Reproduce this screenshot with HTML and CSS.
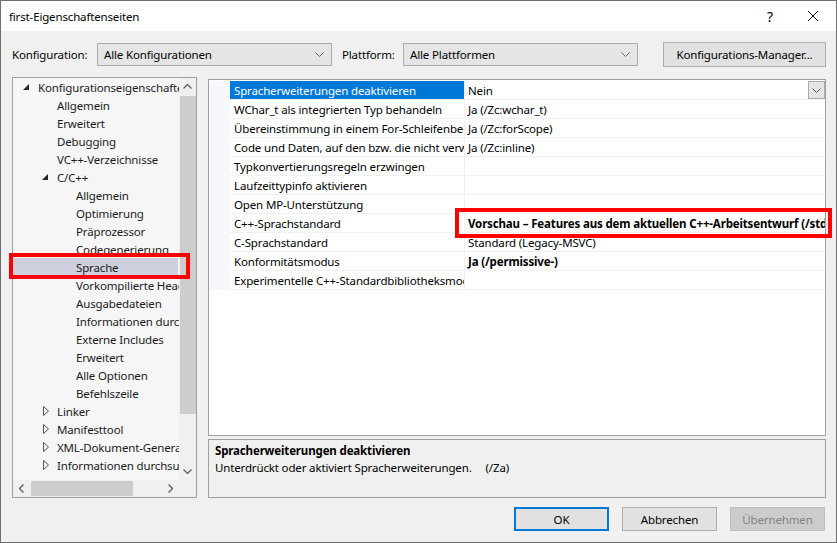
FILE: index.html
```html
<!DOCTYPE html>
<html lang="de">
<head>
    <meta charset="UTF-8">
    <title>first-Eigenschaftenseiten</title>
    <link rel="stylesheet" href="styles.css">
</head>
<body>
    <div class="window">
        <div class="titlebar">
            <span class="title">first-Eigenschaftenseiten</span>
            <span class="help">?</span>
            <span class="close">
                <svg width="12" height="12" viewBox="0 0 12 12"><path d="M1 1 L11 11 M11 1 L1 11" stroke="#111" stroke-width="1" fill="none"/></svg>
            </span>
        </div>

        <div class="content">
            <div class="config-row">
                <label class="lbl lbl-config">Konfiguration:</label>
                <div class="combo">
                    <span>Alle Konfigurationen</span>
                    <svg class="chev" width="9" height="5" viewBox="0 0 9 5"><path d="M0.5 0.5 L4.5 4.5 L8.5 0.5" stroke="#666" fill="none"/></svg>
                </div>
                <label class="lbl lbl-platform">Plattform:</label>
                <div class="combo">
                    <span>Alle Plattformen</span>
                    <svg class="chev" width="9" height="5" viewBox="0 0 9 5"><path d="M0.5 0.5 L4.5 4.5 L8.5 0.5" stroke="#666" fill="none"/></svg>
                </div>
                <button class="btn btn-manager">Konfigurations-Manager...</button>
            </div>

            <div class="main">
                <!-- tree -->
                <div class="tree">
                    <ul class="tree-items">
                        <li class="lv0"><span class="tog"><svg width="6" height="6" viewBox="0 0 6 6"><path d="M6 0 L6 6 L0 6 Z" fill="#262626"/></svg></span>Konfigurationseigenschaften</li>
                        <li class="lv1"><span class="tog"></span>Allgemein</li>
                        <li class="lv1"><span class="tog"></span>Erweitert</li>
                        <li class="lv1"><span class="tog"></span>Debugging</li>
                        <li class="lv1"><span class="tog"></span>VC++-Verzeichnisse</li>
                        <li class="lv1"><span class="tog"><svg width="6" height="6" viewBox="0 0 6 6"><path d="M6 0 L6 6 L0 6 Z" fill="#262626"/></svg></span>C/C++</li>
                        <li class="lv2"><span class="tog"></span>Allgemein</li>
                        <li class="lv2"><span class="tog"></span>Optimierung</li>
                        <li class="lv2"><span class="tog"></span>Präprozessor</li>
                        <li class="lv2"><span class="tog"></span>Codegenerierung</li>
                        <li class="lv2 selected"><span class="tog"></span>Sprache</li>
                        <li class="lv2"><span class="tog"></span>Vorkompilierte Header</li>
                        <li class="lv2"><span class="tog"></span>Ausgabedateien</li>
                        <li class="lv2"><span class="tog"></span>Informationen durchsuchen</li>
                        <li class="lv2"><span class="tog"></span>Externe Includes</li>
                        <li class="lv2"><span class="tog"></span>Erweitert</li>
                        <li class="lv2"><span class="tog"></span>Alle Optionen</li>
                        <li class="lv2"><span class="tog"></span>Befehlszeile</li>
                        <li class="lv1"><span class="tog closed"><svg width="6" height="10" viewBox="0 0 6 10"><path d="M0.5 0.5 L5.5 5 L0.5 9.5 Z" stroke="#555" fill="none"/></svg></span>Linker</li>
                        <li class="lv1"><span class="tog closed"><svg width="6" height="10" viewBox="0 0 6 10"><path d="M0.5 0.5 L5.5 5 L0.5 9.5 Z" stroke="#555" fill="none"/></svg></span>Manifesttool</li>
                        <li class="lv1"><span class="tog closed"><svg width="6" height="10" viewBox="0 0 6 10"><path d="M0.5 0.5 L5.5 5 L0.5 9.5 Z" stroke="#555" fill="none"/></svg></span>XML-Dokument-Generator</li>
                        <li class="lv1"><span class="tog closed"><svg width="6" height="10" viewBox="0 0 6 10"><path d="M0.5 0.5 L5.5 5 L0.5 9.5 Z" stroke="#555" fill="none"/></svg></span>Informationen durchsuchen</li>
                    </ul>
                    <div class="vscroll">
                        <span class="sb-btn"><svg width="9" height="5" viewBox="0 0 9 5"><path d="M0.5 4.5 L4.5 0.5 L8.5 4.5" stroke="#606060" stroke-width="1.3" fill="none"/></svg></span>
                        <div class="sb-track"><div class="vthumb"></div></div>
                        <span class="sb-btn"><svg width="9" height="5" viewBox="0 0 9 5"><path d="M0.5 0.5 L4.5 4.5 L8.5 0.5" stroke="#606060" stroke-width="1.3" fill="none"/></svg></span>
                    </div>
                    <div class="hscroll">
                        <span class="sb-btn"><svg width="5" height="9" viewBox="0 0 5 9"><path d="M4.5 0.5 L0.5 4.5 L4.5 8.5" stroke="#606060" stroke-width="1.3" fill="none"/></svg></span>
                        <div class="sb-track"><div class="hthumb"></div></div>
                        <span class="sb-btn"><svg width="5" height="9" viewBox="0 0 5 9"><path d="M0.5 0.5 L4.5 4.5 L0.5 8.5" stroke="#606060" stroke-width="1.3" fill="none"/></svg></span>
                    </div>
                    <div class="corner"></div>
                </div>

                <div class="right">
                    <div class="grid">
                        <div class="prop">
                            <span class="gutter"></span>
                            <span class="name selected">Spracherweiterungen deaktivieren</span>
                            <span class="value">Nein
                                <span class="drop"><svg width="9" height="5" viewBox="0 0 9 5"><path d="M0.5 0.5 L4.5 4.5 L8.5 0.5" stroke="#555" fill="none"/></svg></span>
                            </span>
                        </div>
                        <div class="prop">
                            <span class="gutter"></span>
                            <span class="name">WChar_t als integrierten Typ behandeln</span>
                            <span class="value">Ja (/Zc:wchar_t)</span>
                        </div>
                        <div class="prop">
                            <span class="gutter"></span>
                            <span class="name">Übereinstimmung in einem For-Schleifenbereich erzwingen</span>
                            <span class="value">Ja (/Zc:forScope)</span>
                        </div>
                        <div class="prop">
                            <span class="gutter"></span>
                            <span class="name">Code und Daten, auf den bzw. die nicht verwiesen wird, entfernen</span>
                            <span class="value">Ja (/Zc:inline)</span>
                        </div>
                        <div class="prop">
                            <span class="gutter"></span>
                            <span class="name">Typkonvertierungsregeln erzwingen</span>
                            <span class="value"></span>
                        </div>
                        <div class="prop">
                            <span class="gutter"></span>
                            <span class="name">Laufzeittypinfo aktivieren</span>
                            <span class="value"></span>
                        </div>
                        <div class="prop">
                            <span class="gutter"></span>
                            <span class="name">Open MP-Unterstützung</span>
                            <span class="value"></span>
                        </div>
                        <div class="prop">
                            <span class="gutter"></span>
                            <span class="name">C++-Sprachstandard</span>
                            <span class="value bold">Vorschau – Features aus dem aktuellen C++-Arbeitsentwurf (/std:c++latest)</span>
                        </div>
                        <div class="prop">
                            <span class="gutter"></span>
                            <span class="name">C-Sprachstandard</span>
                            <span class="value">Standard (Legacy-MSVC)</span>
                        </div>
                        <div class="prop">
                            <span class="gutter"></span>
                            <span class="name">Konformitätsmodus</span>
                            <span class="value bold">Ja (/permissive-)</span>
                        </div>
                        <div class="prop">
                            <span class="gutter"></span>
                            <span class="name">Experimentelle C++-Standardbibliotheksmodule aktivieren</span>
                            <span class="value"></span>
                        </div>
                    </div>

                    <div class="desc">
                        <div class="desc-title">Spracherweiterungen deaktivieren</div>
                        <div class="desc-text">Unterdrückt oder aktiviert Spracherweiterungen.<span class="switch">(/Za)</span></div>
                    </div>
                </div>
            </div>

            <div class="buttons">
                <button class="btn btn-ok">OK</button>
                <button class="btn">Abbrechen</button>
                <button class="btn btn-disabled">Übernehmen</button>
            </div>
        </div>

        <!-- red markers -->
        <div class="mark mark-tree"></div>
        <div class="mark mark-grid"></div>
    </div>
</body>
</html>
```

FILE: styles.css
```css
* {
    margin: 0;
    padding: 0;
    box-sizing: border-box;
}

body {
    font-family: "Noto Sans", "Open Sans", sans-serif;
    font-size: 11.5px;
    letter-spacing: -0.15px;
    color: #000;
    background: #f0f0f0;
}

.window {
    position: relative;
    width: 837px;
    height: 543px;
    border: 1px solid #6e6e6e;
    background: #f0f0f0;
    overflow: hidden;
}

/* title bar */
.titlebar {
    display: flex;
    align-items: center;
    height: 30px;
    background: #fff;
    padding-left: 8px;
}

.titlebar .title {
    flex: 1;
}

.titlebar .help {
    font-size: 14px;
    margin-right: 34px;
}

.titlebar .close {
    display: flex;
    margin-right: 17px;
}

.content {
    padding: 0 10px 0 11px;
}

/* configuration row */
.config-row {
    display: flex;
    align-items: center;
    height: 25px;
    margin-top: 11px;
}

.lbl-config {
    width: 85px;
}

.lbl-platform {
    width: 61px;
    margin-left: 10px;
}

.combo {
    display: flex;
    align-items: center;
    justify-content: space-between;
    width: 235px;
    height: 23px;
    background: #e5e5e5;
    border: 1px solid #acacac;
    padding: 0 7px 0 6px;
}

.btn {
    font-family: inherit;
    font-size: 11.5px;
    letter-spacing: -0.15px;
    color: #000;
    background: #e1e1e1;
    border: 1px solid #adadad;
    height: 24px;
    width: 95px;
}

.btn-manager {
    width: 163px;
    height: 25px;
    margin-left: auto;
}

/* main area */
.main {
    display: flex;
    gap: 11px;
    height: 421px;
    margin-top: 10px;
}

.tree {
    width: 185px;
    border: 1px solid #a0a0a0;
    background: #f6f6f6;
    display: grid;
    grid-template-columns: 1fr 17px;
    grid-template-rows: 1fr 17px;
    overflow: hidden;
}

.tree-items {
    list-style: none;
    overflow: hidden;
}

.tree-items li {
    display: flex;
    align-items: center;
    height: 18px;
    white-space: nowrap;
    color: #1b1b1b;
}

.tree-items li.lv0 { padding-left: 6px; }
.tree-items li.lv1 { padding-left: 25px; }
.tree-items li.lv2 { padding-left: 44px; }

.tree-items li.selected {
    background: #cdd0dc;
    margin-right: 1px;
}

.tog {
    display: flex;
    align-items: center;
    width: 19px;
    height: 18px;
    flex-shrink: 0;
    padding-left: 4px;
}

.tog.closed {
    padding-left: 5px;
}

.vscroll {
    display: flex;
    flex-direction: column;
    background: #f0f0f0;
}

.hscroll {
    display: flex;
    background: #f0f0f0;
}

.corner {
    background: #f0f0f0;
}

.sb-btn {
    display: flex;
    align-items: center;
    justify-content: center;
    width: 17px;
    height: 17px;
    flex-shrink: 0;
}

.sb-track {
    flex: 1;
}

.vthumb {
    margin: 1px 0 0 1px;
    height: 318px;
    background: #cdcdcd;
}

.hthumb {
    margin: 1px 0 0 1px;
    width: 102px;
    height: 15px;
    background: #cdcdcd;
}

/* property grid */
.right {
    flex: 1;
    display: flex;
    flex-direction: column;
    gap: 3px;
}

.grid {
    height: 357px;
    margin-top: 2px;
    background: #fff;
    border: 1px solid #a0a0a0;
    padding-top: 1px;
}

.prop {
    display: grid;
    grid-template-columns: 21px 235px 1fr;
    height: 19px;
}

.prop .gutter {
    background: #f6f8fc;
}

.prop .name,
.prop .value {
    position: relative;
    display: flex;
    align-items: center;
    white-space: nowrap;
    overflow: hidden;
    border-bottom: 1px solid #f0f0f0;
    padding-left: 4px;
}

.prop .name {
    border-right: 1px solid #f0f0f0;
}

.prop .name.selected {
    background: #0078d7;
    color: #fff;
}

.prop .value {
    padding-left: 3px;
}

.prop .value.bold {
    font-weight: bold;
}

.drop {
    position: absolute;
    right: 0;
    top: 0;
    display: flex;
    align-items: center;
    justify-content: center;
    width: 17px;
    height: 18px;
    background: #e5e5e5;
    border: 1px solid #acacac;
}

/* description */
.desc {
    flex: 1;
    border: 1px solid #a0a0a0;
    background: #f0f0f0;
    padding: 2px 6px;
}

.desc-title {
    font-weight: bold;
    line-height: 17px;
}

.desc-text {
    line-height: 17px;
}

.desc-text .switch {
    margin-left: 14px;
}

/* bottom buttons */
.buttons {
    display: flex;
    justify-content: flex-end;
    gap: 13px;
    margin-top: 9px;
    padding-right: 1px;
}

.btn-ok {
    border: 2px solid #0078d7;
}

.btn-disabled {
    background: #cccccc;
    border-color: #bfbfbf;
    color: #838383;
}

/* red markers */
.mark {
    position: absolute;
    border: 4px solid #ff0000;
}

.mark-tree {
    left: 8px;
    top: 252px;
    width: 181px;
    height: 26px;
}

.mark-grid {
    left: 454px;
    top: 207px;
    width: 377px;
    height: 30px;
}
```
